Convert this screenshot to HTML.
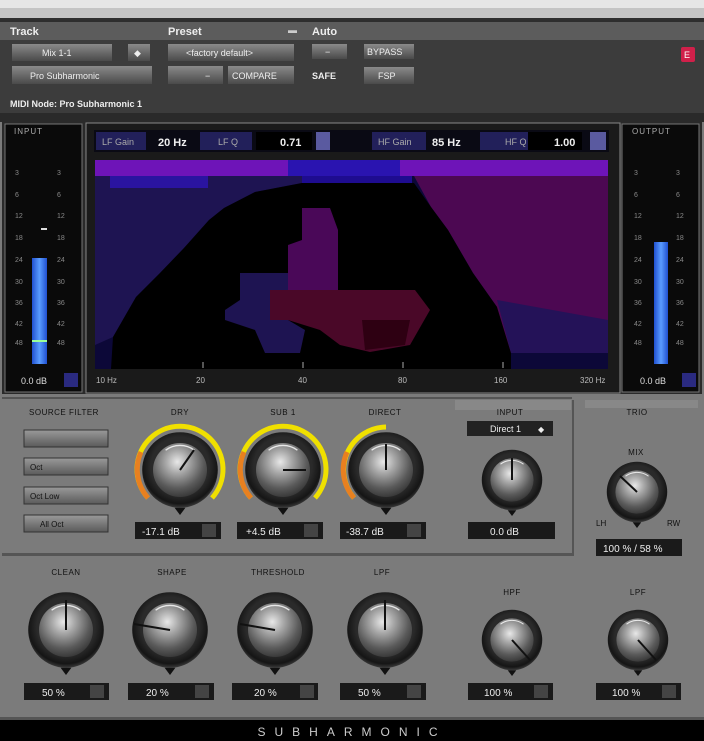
<!DOCTYPE html>
<html><head><meta charset="utf-8"><style>
html,body{margin:0;padding:0;width:704px;height:741px;overflow:hidden;background:#7b7b7b;font-family:"Liberation Sans",sans-serif}
svg{display:block}
text{font-family:"Liberation Sans",sans-serif}
</style></head><body>
<svg width="704" height="741" viewBox="0 0 704 741" xmlns="http://www.w3.org/2000/svg">
<defs>
<linearGradient id="btn" x1="0" y1="0" x2="0" y2="1"><stop offset="0" stop-color="#8a8a8a"/><stop offset="0.5" stop-color="#6a6a6a"/><stop offset="1" stop-color="#4a4a4a"/></linearGradient>
<linearGradient id="lbtn" x1="0" y1="0" x2="0" y2="1"><stop offset="0" stop-color="#9a9a9a"/><stop offset="0.5" stop-color="#7a7a7a"/><stop offset="1" stop-color="#5a5a5a"/></linearGradient>
<radialGradient id="outer" cx="0.5" cy="0.45" r="0.55"><stop offset="0.7" stop-color="#2a2a2a"/><stop offset="0.9" stop-color="#151515"/><stop offset="1" stop-color="#3a3a3a"/></radialGradient>
<radialGradient id="silver" cx="0.45" cy="0.35" r="0.7"><stop offset="0" stop-color="#e8e8e8"/><stop offset="0.3" stop-color="#a8a8a8"/><stop offset="0.7" stop-color="#5a5a5a"/><stop offset="1" stop-color="#303030"/></radialGradient>
<linearGradient id="bar" x1="0" y1="0" x2="1" y2="0"><stop offset="0" stop-color="#2050d0"/><stop offset="0.5" stop-color="#5a9cff"/><stop offset="1" stop-color="#2050d0"/></linearGradient>
<symbol id="knob" viewBox="-50 -50 100 100">
<circle r="42" fill="url(#outer)"/>
<circle r="30" fill="url(#silver)"/>
<path d="M-16 -22 A27 27 0 0 1 16 -22" stroke="#fff" stroke-width="1.5" fill="none" opacity="0.8"/>
<path d="M-6 42 L0 50 L6 42 Z" fill="#111"/>
</symbol>
</defs>

<rect x="0" y="0" width="704" height="8" fill="#e6e6e6"/>
<rect x="0" y="8" width="704" height="10" fill="#c4c4c4"/>
<rect x="0" y="18" width="704" height="4" fill="#2e2e2e"/>
<rect x="0" y="22" width="704" height="18" fill="#5c5c5c"/>
<rect x="0" y="40" width="704" height="73" fill="#3c3c3c"/>
<rect x="0" y="113" width="704" height="9" fill="#2a2a2a"/>
<text x="10" y="35" font-size="11" font-weight="bold" fill="#eee">Track</text>
<text x="168" y="35" font-size="11" font-weight="bold" fill="#eee">Preset</text>
<text x="288" y="33" font-size="9" fill="#ccc">▬</text>
<text x="312" y="35" font-size="11" font-weight="bold" fill="#eee">Auto</text>

<rect x="12" y="44" width="100" height="17" fill="url(#btn)"/><text x="42" y="56" font-size="9" fill="#eee">Mix 1-1</text>
<rect x="128" y="44" width="22" height="17" fill="url(#btn)"/><text x="134" y="56" font-size="9" fill="#eee">◆</text>
<rect x="12" y="66" width="140" height="18" fill="url(#btn)"/><text x="30" y="79" font-size="9" fill="#eee">Pro Subharmonic</text>
<rect x="168" y="44" width="126" height="17" fill="url(#btn)"/><text x="186" y="56" font-size="9" fill="#eee">&lt;factory default&gt;</text>
<rect x="168" y="66" width="55" height="18" fill="url(#btn)"/><text x="205" y="79" font-size="9" fill="#eee">−</text>
<rect x="228" y="66" width="66" height="18" fill="url(#btn)"/><text x="232" y="79" font-size="9" fill="#eee">COMPARE</text>
<rect x="312" y="44" width="35" height="15" fill="url(#btn)"/><text x="325" y="55" font-size="9" fill="#eee">−</text>
<text x="312" y="79" font-size="9" font-weight="bold" fill="#eee">SAFE</text>
<rect x="364" y="44" width="50" height="15" fill="url(#btn)"/><text x="367" y="55" font-size="9" fill="#eee">BYPASS</text>
<rect x="364" y="67" width="50" height="17" fill="url(#btn)"/><text x="378" y="79" font-size="9" fill="#eee">FSP</text>
<rect x="681" y="47" width="14" height="15" rx="2" fill="#d0204a"/><text x="684" y="58" font-size="9" fill="#fff">E</text>
<text x="10" y="107" font-size="9" font-weight="bold" fill="#eee">MIDI Node: Pro Subharmonic 1</text>

<rect x="2" y="122" width="700" height="272" fill="#2a2a2a"/>
<rect x="5" y="124" width="77" height="268" fill="#0a0a0a" stroke="#777" stroke-width="1"/>
<text x="14" y="134" font-size="8" fill="#aaa" letter-spacing="1">INPUT</text>
<g font-size="7" fill="#888">
<text x="15" y="175">3</text><text x="15" y="197">6</text><text x="15" y="218">12</text><text x="15" y="240">18</text><text x="15" y="262">24</text><text x="15" y="284">30</text><text x="15" y="305">36</text><text x="15" y="326">42</text><text x="15" y="345">48</text>
<text x="57" y="175">3</text><text x="57" y="197">6</text><text x="57" y="218">12</text><text x="57" y="240">18</text><text x="57" y="262">24</text><text x="57" y="284">30</text><text x="57" y="305">36</text><text x="57" y="326">42</text><text x="57" y="345">48</text>
</g>
<rect x="32" y="258" width="15" height="106" fill="url(#bar)"/>
<rect x="32" y="340" width="15" height="2" fill="#9f9"/>
<rect x="41" y="228" width="6" height="2" fill="#ddd"/>
<text x="21" y="384" font-size="9" fill="#ddd">0.0 dB</text>
<rect x="64" y="373" width="14" height="14" fill="#2a2a80"/>

<rect x="622" y="124" width="77" height="268" fill="#0a0a0a" stroke="#777" stroke-width="1"/>
<text x="632" y="134" font-size="8" fill="#aaa" letter-spacing="1">OUTPUT</text>
<g font-size="7" fill="#888">
<text x="634" y="175">3</text><text x="634" y="197">6</text><text x="634" y="218">12</text><text x="634" y="240">18</text><text x="634" y="262">24</text><text x="634" y="284">30</text><text x="634" y="305">36</text><text x="634" y="326">42</text><text x="634" y="345">48</text>
<text x="676" y="175">3</text><text x="676" y="197">6</text><text x="676" y="218">12</text><text x="676" y="240">18</text><text x="676" y="262">24</text><text x="676" y="284">30</text><text x="676" y="305">36</text><text x="676" y="326">42</text><text x="676" y="345">48</text>
</g>
<rect x="654" y="242" width="14" height="122" fill="url(#bar)"/>
<text x="640" y="384" font-size="9" fill="#ddd">0.0 dB</text>
<rect x="682" y="373" width="14" height="14" fill="#2a2a80"/>

<rect x="86" y="123" width="534" height="270" fill="#1a1a1a" stroke="#888" stroke-width="1"/>
<rect x="94" y="130" width="515" height="22" fill="#0a0a14"/>
<rect x="96" y="132" width="50" height="18" fill="#22205a"/><text x="102" y="145" font-size="9" fill="#aaa">LF Gain</text>
<text x="158" y="146" font-size="11" font-weight="bold" fill="#eee">20 Hz</text>
<rect x="200" y="132" width="52" height="18" fill="#22205a"/><text x="218" y="145" font-size="9" fill="#aaa">LF Q</text>
<rect x="256" y="132" width="56" height="18" fill="#000"/><text x="280" y="146" font-size="11" font-weight="bold" fill="#eee">0.71</text>
<rect x="316" y="132" width="14" height="18" fill="#5a5aa0"/>
<rect x="372" y="132" width="54" height="18" fill="#22205a"/><text x="378" y="145" font-size="9" fill="#aaa">HF Gain</text>
<text x="432" y="146" font-size="11" font-weight="bold" fill="#eee">85 Hz</text>
<rect x="480" y="132" width="70" height="18" fill="#22205a"/><text x="505" y="145" font-size="9" fill="#aaa">HF Q</text>
<rect x="528" y="132" width="54" height="18" fill="#000"/><text x="554" y="146" font-size="11" font-weight="bold" fill="#eee">1.00</text>
<rect x="590" y="132" width="16" height="18" fill="#5a5aa0"/>

<rect x="95" y="160" width="513" height="209" fill="#0c0838"/>
<polygon points="95,175 302,175 302,183 255,192 224,208 209,220 184,248 160,273 136,297 113,337 95,345" fill="#1e1452"/>
<rect x="95" y="160" width="193" height="16" fill="#6e14b8"/>
<rect x="400" y="160" width="208" height="16" fill="#6e14b8"/>
<rect x="288" y="160" width="112" height="16" fill="#2a14b0"/>
<rect x="110" y="176" width="98" height="12" fill="#2a14a0"/>
<rect x="302" y="176" width="110" height="8" fill="#1e0c90"/>
<polygon points="414,176 608,176 608,353 511,353 497,340 497,307 473,273 448,230 431,207" fill="#4c0852"/>
<polygon points="497,300 608,320 608,353 511,353" fill="#241258"/>
<polygon points="302,183 414,183 431,207 448,230 473,273 497,307 511,353 511,369 111,369 113,337 136,297 160,273 184,248 209,220 224,208 255,192" fill="#000"/>
<polygon points="302,208 330,208 338,230 338,292 288,292 288,245 302,240" fill="#4a0858"/>
<polygon points="240,273 288,273 288,320 305,330 300,353 265,353 255,330 225,320 225,310 240,300" fill="#1e1452"/>
<polygon points="270,290 415,290 430,310 410,345 370,352 340,345 320,330 288,320 270,320" fill="#4a0828"/>
<polygon points="362,320 410,320 405,345 365,350" fill="#2e0012"/>
<g font-size="8" fill="#bbb">
<text x="96" y="383">10 Hz</text><text x="196" y="383">20</text><text x="298" y="383">40</text><text x="398" y="383">80</text><text x="494" y="383">160</text><text x="580" y="383">320 Hz</text>
</g>
<g fill="#555"><rect x="202" y="362" width="2" height="6"/><rect x="302" y="362" width="2" height="6"/><rect x="402" y="362" width="2" height="6"/><rect x="502" y="362" width="2" height="6"/></g>

<rect x="0" y="394" width="704" height="326" fill="#7b7b7b"/>
<rect x="2" y="397" width="570" height="2" fill="#555"/>
<rect x="2" y="553" width="570" height="3" fill="#555"/>
<rect x="455" y="400" width="116" height="10" fill="#888"/>
<rect x="572" y="400" width="2" height="156" fill="#555"/>
<rect x="585" y="400" width="113" height="8" fill="#888"/>
<rect x="0" y="717" width="704" height="3" fill="#555"/>

<g font-size="8" fill="#111" text-anchor="middle" letter-spacing="0.5">
<text x="64" y="415">SOURCE FILTER</text>
<text x="180" y="415">DRY</text>
<text x="283" y="415">SUB 1</text>
<text x="385" y="415">DIRECT</text>
<text x="510" y="415">INPUT</text>
<text x="637" y="415">TRIO</text>
<text x="66" y="575">CLEAN</text>
<text x="172" y="575">SHAPE</text>
<text x="278" y="575">THRESHOLD</text>
<text x="382" y="575">LPF</text>
<text x="512" y="595">HPF</text>
<text x="638" y="595">LPF</text>
<text x="636" y="455">MIX</text>
</g>
<g><rect x="24" y="430" width="84" height="17" fill="url(#lbtn)" stroke="#333"/>
<rect x="24" y="458" width="84" height="17" fill="url(#lbtn)" stroke="#333"/><text x="30" y="470" font-size="8" fill="#111">Oct</text>
<rect x="24" y="487" width="84" height="17" fill="url(#lbtn)" stroke="#333"/><text x="30" y="499" font-size="8" fill="#111">Oct Low</text>
<rect x="24" y="515" width="84" height="17" fill="url(#lbtn)" stroke="#333"/><text x="40" y="527" font-size="8" fill="#111">All Oct</text></g>

<rect x="467" y="421" width="86" height="15" fill="#222"/><text x="490" y="432" font-size="9" fill="#eee">Direct 1</text><text x="538" y="432" font-size="8" fill="#eee">◆</text>

<g fill="none" stroke-width="5">
<path d="M148 498 A43 43 0 1 1 212 498" stroke="#f0e000"/><path d="M148 498 A43 43 0 0 1 141 452" stroke="#e88020"/>
<path d="M251 498 A43 43 0 1 1 315 498" stroke="#f0e000"/><path d="M251 498 A43 43 0 0 1 244 452" stroke="#e88020"/>
<path d="M354 498 A43 43 0 0 1 386 427" stroke="#f0e000"/><path d="M354 498 A43 43 0 0 1 347 452" stroke="#e88020"/>
</g>
<use href="#knob" x="135" y="425" width="90" height="90"/>
<use href="#knob" x="238" y="425" width="90" height="90"/>
<use href="#knob" x="341" y="425" width="90" height="90"/>
<use href="#knob" x="476" y="444" width="72" height="72"/>
<use href="#knob" x="601" y="456" width="72" height="72"/>
<g stroke="#111" stroke-width="2">
<line x1="180" y1="470" x2="194" y2="450"/>
<line x1="283" y1="470" x2="306" y2="470"/>
<line x1="386" y1="470" x2="386" y2="444"/>
<line x1="512" y1="480" x2="512" y2="458"/>
<line x1="637" y1="492" x2="620" y2="476"/>
</g>

<g font-size="10" fill="#eee">
<rect x="135" y="522" width="86" height="17" fill="#1a1a1a"/><text x="142" y="535">-17.1 dB</text><rect x="202" y="524" width="14" height="13" fill="#444"/>
<rect x="237" y="522" width="86" height="17" fill="#1a1a1a"/><text x="246" y="535">+4.5 dB</text><rect x="304" y="524" width="14" height="13" fill="#444"/>
<rect x="340" y="522" width="86" height="17" fill="#1a1a1a"/><text x="346" y="535">-38.7 dB</text><rect x="407" y="524" width="14" height="13" fill="#444"/>
<rect x="468" y="522" width="87" height="17" fill="#1a1a1a"/><text x="490" y="535">0.0 dB</text>
<rect x="596" y="539" width="86" height="17" fill="#1a1a1a"/><text x="603" y="552">100 % / 58 %</text>
</g>
<text x="596" y="526" font-size="8" fill="#111">LH</text><text x="667" y="526" font-size="8" fill="#111">RW</text>

<use href="#knob" x="21" y="585" width="90" height="90"/>
<use href="#knob" x="125" y="585" width="90" height="90"/>
<use href="#knob" x="230" y="585" width="90" height="90"/>
<use href="#knob" x="340" y="585" width="90" height="90"/>
<use href="#knob" x="476" y="604" width="72" height="72"/>
<use href="#knob" x="602" y="604" width="72" height="72"/>
<g stroke="#111" stroke-width="2">
<line x1="66" y1="630" x2="66" y2="600"/>
<line x1="170" y1="630" x2="134" y2="624"/>
<line x1="275" y1="630" x2="240" y2="624"/>
<line x1="385" y1="630" x2="385" y2="600"/>
<line x1="512" y1="640" x2="530" y2="660"/>
<line x1="638" y1="640" x2="656" y2="660"/>
</g>
<g font-size="10" fill="#eee">
<rect x="24" y="683" width="85" height="17" fill="#1a1a1a"/><text x="42" y="696">50 %</text><rect x="90" y="685" width="14" height="13" fill="#444"/>
<rect x="128" y="683" width="86" height="17" fill="#1a1a1a"/><text x="146" y="696">20 %</text><rect x="195" y="685" width="14" height="13" fill="#444"/>
<rect x="232" y="683" width="86" height="17" fill="#1a1a1a"/><text x="254" y="696">20 %</text><rect x="300" y="685" width="14" height="13" fill="#444"/>
<rect x="340" y="683" width="86" height="17" fill="#1a1a1a"/><text x="358" y="696">50 %</text><rect x="407" y="685" width="14" height="13" fill="#444"/>
<rect x="468" y="683" width="85" height="17" fill="#1a1a1a"/><text x="484" y="696">100 %</text><rect x="534" y="685" width="14" height="13" fill="#444"/>
<rect x="596" y="683" width="85" height="17" fill="#1a1a1a"/><text x="612" y="696">100 %</text><rect x="662" y="685" width="14" height="13" fill="#444"/>
</g>

<rect x="0" y="720" width="704" height="21" fill="#000"/>
<text x="352" y="736" font-size="12" fill="#ccc" text-anchor="middle" letter-spacing="9">SUBHARMONIC</text>
</svg>
</body></html>
